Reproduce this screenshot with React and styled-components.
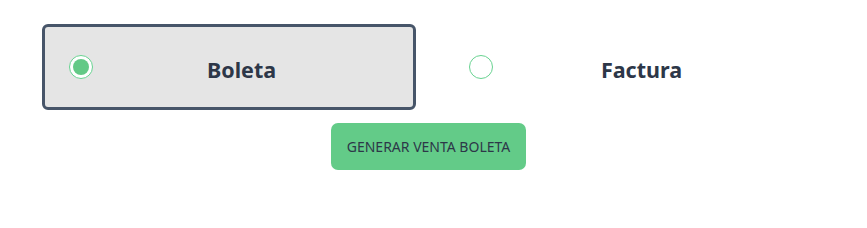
import React, { useState } from "react";
import styled, { createGlobalStyle } from "styled-components";

const GlobalStyle = createGlobalStyle`
  body {
    margin: 0;
    background: #ffffff;
    font-family: "Noto Sans", "Open Sans", sans-serif;
  }
`;

const Page = styled.div`
  padding: 24px 52px 0 42px;
`;

const Options = styled.div`
  display: grid;
  grid-template-columns: 374px 374px;
  column-gap: 26px;
`;

const Option = styled.label`
  display: flex;
  align-items: center;
  height: 86px;
  box-sizing: border-box;
  padding: 0 23px 0 24px;
  border: 3px solid ${(p) => (p.$active ? "#475569" : "transparent")};
  border-radius: 6px;
  background: ${(p) => (p.$active ? "#e5e5e5" : "transparent")};
  cursor: pointer;
`;

const Radio = styled.span`
  width: 24px;
  height: 24px;
  box-sizing: border-box;
  border-radius: 50%;
  border: 1px solid #68d391;
  background: #ffffff;
  display: flex;
  align-items: center;
  justify-content: center;
  flex-shrink: 0;

  &::after {
    content: "";
    width: 16px;
    height: 16px;
    border-radius: 50%;
    background: ${(p) => (p.$checked ? "#63c986" : "transparent")};
  }
`;

const Label = styled.span`
  flex: 1;
  text-align: center;
  font-size: 21.5px;
  font-weight: 700;
  color: #2d3748;
  padding-top: 4px;
`;

const Actions = styled.div`
  display: flex;
  justify-content: center;
  padding-top: 13px;
  width: 773px;
`;

const Button = styled.button`
  height: 47px;
  padding: 0 16px;
  border: none;
  border-radius: 7px;
  background: #63cb88;
  color: #2d3748;
  font-family: "Noto Sans", sans-serif;
  font-size: 14px;
  text-transform: uppercase;
  cursor: pointer;
`;

export default function App() {
  const [tipo, setTipo] = useState("boleta");
  const opciones = [
    { id: "boleta", label: "Boleta" },
    { id: "factura", label: "Factura" },
  ];

  return (
    <>
      <GlobalStyle />
      <Page>
        <Options>
          {opciones.map((o) => (
            <Option key={o.id} $active={tipo === o.id} onClick={() => setTipo(o.id)}>
              <Radio $checked={tipo === o.id} />
              <Label>{o.label}</Label>
            </Option>
          ))}
        </Options>
        <Actions>
          <Button>Generar venta {tipo}</Button>
        </Actions>
      </Page>
    </>
  );
}
